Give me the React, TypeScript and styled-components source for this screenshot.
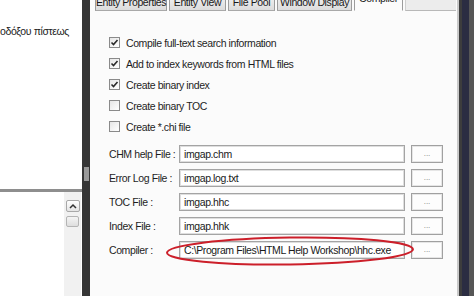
import React from "react";
import styled, { createGlobalStyle } from "styled-components";

const Global = createGlobalStyle`
  html, body { margin: 0; padding: 0; background: #ffffff; }
  body { font-family: "Liberation Sans", Arial, sans-serif; }
  * { box-sizing: border-box; }
`;

const Screen = styled.div`
  display: flex;
  width: 474px;
  height: 296px;
  overflow: hidden;
  background: #ffffff;
  font-family: "Liberation Sans", Arial, sans-serif;
  font-size: 10.5px;
  letter-spacing: -0.4px;
  color: #1e1e1e;
`;

const LeftPane = styled.div`
  width: 82px;
  display: flex;
  flex-direction: column;
  background: #ffffff;
`;

const LeftTop = styled.div`
  height: 189px;
  padding-top: 25px;
  white-space: nowrap;
  overflow: hidden;
  color: #222;
  font-size: 10.5px;
`;

const GrayBar = styled.div`
  height: 3px;
  background: #8e8e8e;
`;

const LeftBottom = styled.div`
  flex: 1;
  display: flex;
  justify-content: flex-end;
`;

const ScrollTrack = styled.div`
  width: 17px;
  margin-right: 1px;
  background: #f1f1f1;
  display: flex;
  flex-direction: column;
  align-items: center;
  padding-top: 8px;
  gap: 4px;
`;

const ScrollButton = styled.div`
  width: 14px;
  height: 12px;
  border: 1px solid #a8a8a8;
  border-radius: 2px;
  background: linear-gradient(#ffffff, #e4e4e4);
  display: flex;
  align-items: center;
  justify-content: center;
`;

const ScrollThumb = styled.div`
  width: 13px;
  height: 11px;
  border: 1px solid #b4b4b4;
  border-radius: 2px;
  background: linear-gradient(#f4f4f4, #dedede);
`;

const Divider = styled.div`
  width: 8px;
  background: #363636;
  padding-top: 167px;
  display: flex;
  justify-content: center;
`;

const DividerThumb = styled.div`
  width: 5px;
  height: 14px;
  background: #9a9a9a;
`;

const Dialog = styled.div`
  width: 369px;
  display: flex;
  flex-direction: column;
  border-right: 2px solid #c9c9c9;
  background: #fbfbfb;
`;

const TabStrip = styled.div`
  height: 11px;
  display: flex;
  align-items: flex-end;
  gap: 2px;
  padding-left: 5px;
  overflow: hidden;
  background: #fbfbfb;
`;

const Tab = styled.div<{ $w: number; $active?: boolean }>`
  flex: none;
  width: ${(p) => p.$w}px;
  height: ${(p) => (p.$active ? 20 : 18)}px;
  display: flex;
  align-items: flex-end;
  justify-content: center;
  padding-bottom: ${(p) => (p.$active ? 6 : 2)}px;
  white-space: nowrap;
  border: 1px solid #9c9c9c;
  border-bottom: ${(p) => (p.$active ? "1px solid #fbfbfb" : "1px solid #a8a8a8")};
  background: ${(p) =>
    p.$active ? "#fbfbfb" : "linear-gradient(#f4f4f4, #dcdcdc)"};
  color: #1a1a1a;
`;

const TabFiller = styled.div`
  flex: 1;
  height: 11px;
  border-left: 1px solid #cfcfcf;
  border-bottom: 1px solid #b8b8b8;
  background: #ececec;
  margin-right: 1px;
`;

const Panel = styled.div`
  flex: 1;
  padding: 21px 14px 0 19px;
  display: flex;
  flex-direction: column;
`;

const CheckList = styled.div`
  display: flex;
  flex-direction: column;
`;

const CheckRow = styled.div`
  height: 21px;
  display: flex;
  align-items: center;
  gap: 6px;
  white-space: nowrap;
`;

const Box = styled.div`
  width: 11px;
  height: 11px;
  border: 1px solid #8a8a8a;
  background: linear-gradient(135deg, #e6e6e6, #ffffff);
  display: flex;
  align-items: center;
  justify-content: center;
`;

const Fields = styled.div`
  margin-top: 8px;
  display: flex;
  flex-direction: column;
  gap: 6px;
`;

const FieldRow = styled.div`
  position: relative;
  height: 18px;
  display: flex;
  align-items: center;
`;

const Label = styled.div`
  width: 70px;
  flex: none;
  white-space: nowrap;
`;

const Input = styled.div`
  flex: 1;
  height: 18px;
  border: 1px solid #a4a4a4;
  box-shadow: inset 0 0 0 1px #dedede;
  background: #ffffff;
  display: flex;
  align-items: center;
  padding-left: 4px;
  white-space: nowrap;
  overflow: hidden;
  color: #1a1a1a;
`;

const Browse = styled.div`
  width: 32px;
  height: 18px;
  margin-left: 6px;
  flex: none;
  border: 1px solid #a0a0a0;
  box-shadow: inset 0 0 0 1px #e6e6e6;
  background: #fdfdfd;
  display: flex;
  align-items: flex-end;
  justify-content: center;
  padding-bottom: 4px;
  font-size: 8px;
  letter-spacing: 0;
  color: #7a7a7a;
  line-height: 1;
`;

const Highlight = styled.svg`
  position: absolute;
  left: 55px;
  top: -6px;
  width: 254px;
  height: 32px;
  overflow: visible;
  pointer-events: none;
`;

const RightEdge = styled.div`
  flex: 1;
  background: linear-gradient(
    to right,
    #3d3d3d 0,
    #3d3d3d 3px,
    #2b2d42 3px,
    #2b2d42 10px,
    #565656 10px
  );
`;

const Check = () => (
  <svg width="9" height="9" viewBox="0 0 9 9">
    <path d="M1.5 4.5 L3.5 6.5 L7.5 2" fill="none" stroke="#2a2a2a" strokeWidth="1.6" />
  </svg>
);

const checks = [
  { label: "Compile full-text search information", on: true },
  { label: "Add to index keywords from HTML files", on: true },
  { label: "Create binary index", on: true },
  { label: "Create binary TOC", on: false },
  { label: "Create *.chi file", on: false },
];

const fields = [
  { label: "CHM help File :", value: "imgap.chm" },
  { label: "Error Log File :", value: "imgap.log.txt" },
  { label: "TOC File :", value: "imgap.hhc" },
  { label: "Index File :", value: "imgap.hhk" },
  { label: "Compiler :", value: "C:\\Program Files\\HTML Help Workshop\\hhc.exe", mark: true },
];

const tabs = [
  { label: "Entity Properties", w: 72 },
  { label: "Entity View", w: 57 },
  { label: "File Pool", w: 47 },
  { label: "Window Display", w: 75 },
  { label: "Compiler", w: 49, active: true },
];

export default function App() {
  return (
    <>
      <Global />
      <Screen>
        <LeftPane>
          <LeftTop>οδόξου πίστεως</LeftTop>
          <GrayBar />
          <LeftBottom>
            <ScrollTrack>
              <ScrollButton>
                <svg width="8" height="6" viewBox="0 0 8 6">
                  <path d="M1 5 L4 2 L7 5" fill="none" stroke="#333" strokeWidth="1.5" />
                </svg>
              </ScrollButton>
              <ScrollThumb />
            </ScrollTrack>
          </LeftBottom>
        </LeftPane>
        <Divider>
          <DividerThumb />
        </Divider>
        <Dialog>
          <TabStrip>
            {tabs.map((t) => (
              <Tab key={t.label} $w={t.w} $active={t.active}>
                {t.label}
              </Tab>
            ))}
            <TabFiller />
          </TabStrip>
          <Panel>
            <CheckList>
              {checks.map((c) => (
                <CheckRow key={c.label}>
                  <Box>{c.on && <Check />}</Box>
                  {c.label}
                </CheckRow>
              ))}
            </CheckList>
            <Fields>
              {fields.map((f) => (
                <FieldRow key={f.label}>
                  <Label>{f.label}</Label>
                  <Input>{f.value}</Input>
                  <Browse>...</Browse>
                  {f.mark && (
                    <Highlight viewBox="0 0 254 32">
                      <ellipse
                        cx="126"
                        cy="16"
                        rx="123"
                        ry="13.5"
                        fill="none"
                        stroke="#cc1f2a"
                        strokeWidth="2"
                        transform="rotate(-0.8 126 16)"
                      />
                    </Highlight>
                  )}
                </FieldRow>
              ))}
            </Fields>
          </Panel>
        </Dialog>
        <RightEdge />
      </Screen>
    </>
  );
}
